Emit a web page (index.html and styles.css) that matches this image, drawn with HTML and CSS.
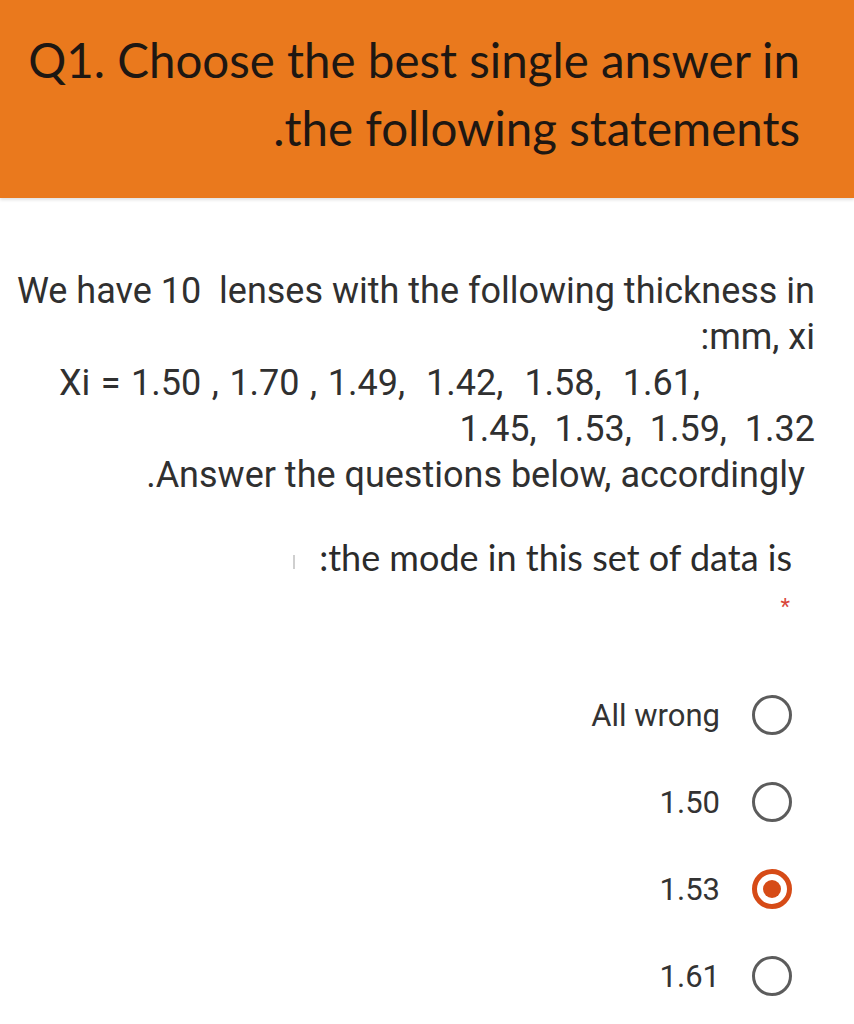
FILE: index.html
```html
<!DOCTYPE html>
<html>
<head>
<meta charset="utf-8">
<link rel="stylesheet" href="styles.css">
</head>
<body>
<header class="banner">
  <div class="title-line">Q1. Choose the best single answer in</div>
  <div class="title-line">.the following statements</div>
</header>
<section class="desc">
  <div class="line">We have 10&nbsp; lenses with the following thickness in</div>
  <div class="line">:mm, xi</div>
  <div class="line xi">Xi = 1.50 , 1.70 , 1.49,&nbsp; 1.42,&nbsp; 1.58,&nbsp; 1.61,</div>
  <div class="line">1.45,&nbsp; 1.53,&nbsp; 1.59,&nbsp; 1.32</div>
  <div class="line answer">.Answer the questions below, accordingly</div>
</section>
<section class="question">
  <div class="q-text"><span class="tick"></span>:the mode in this set of data is</div>
  <div class="req">*</div>
</section>
<section class="options">
  <div class="opt"><span class="label">All wrong</span><span class="radio"></span></div>
  <div class="opt"><span class="label">1.50</span><span class="radio"></span></div>
  <div class="opt"><span class="label">1.53</span><span class="radio checked"></span></div>
  <div class="opt"><span class="label">1.61</span><span class="radio"></span></div>
</section>
</body>
</html>
```

FILE: styles.css
```css
html, body {
  margin: 0;
  padding: 0;
  background: #ffffff;
}
body {
  width: 854px;
  height: 1024px;
  overflow: hidden;
}
.banner {
  background: #ea791d;
  height: 198px;
  box-sizing: border-box;
  padding: 26px 54px 0 0;
  text-align: right;
  box-shadow: 0 2px 3px rgba(0,0,0,0.12);
}
.title-line {
  font-family: "Lato", "Open Sans", sans-serif;
  font-size: 47.5px;
  line-height: 68px;
  color: #1e1712;
  white-space: nowrap;
}
.desc {
  margin-top: 70px;
  padding-right: 39px;
  text-align: right;
  font-family: Roboto, "Liberation Sans", sans-serif;
  font-size: 36px;
  color: #303030;
}
.desc .line {
  line-height: 46px;
  white-space: nowrap;
}
.desc .xi {
  padding-right: 115px;
  word-spacing: 1.6px;
}
.desc .answer {
  padding-right: 10px;
}
.question {
  margin-top: 36px;
  padding-right: 62px;
  text-align: right;
}
.q-text {
  font-family: "Lato", "Open Sans", sans-serif;
  font-size: 36px;
  line-height: 46px;
  color: #2b2b2b;
  white-space: nowrap;
}
.tick {
  display: inline-block;
  width: 2px;
  height: 14px;
  background: #cfcfcf;
  margin-right: 24px;
  vertical-align: middle;
}
.req {
  font-family: Roboto, sans-serif;
  font-size: 22px;
  line-height: 30px;
  margin-top: 12px;
  color: #d9463a;
  padding-right: 2px;
}
.options {
  margin-top: 72px;
  padding-right: 62px;
  display: flex;
  flex-direction: column;
  align-items: flex-end;
  gap: 45px;
}
.opt {
  display: flex;
  align-items: center;
  gap: 32px;
  height: 42px;
}
.label {
  font-family: Roboto, "Liberation Sans", sans-serif;
  font-size: 31px;
  color: #333333;
}
.radio {
  width: 40px;
  height: 40px;
  border: 3px solid #5c5c5c;
  border-radius: 50%;
  box-sizing: border-box;
  position: relative;
}
.radio.checked {
  border-color: #d64b17;
  border-width: 5px;
}
.radio.checked::after {
  content: "";
  position: absolute;
  left: 50%;
  top: 50%;
  width: 18px;
  height: 18px;
  margin: -9px 0 0 -9px;
  border-radius: 50%;
  background: #d64b17;
}
```
